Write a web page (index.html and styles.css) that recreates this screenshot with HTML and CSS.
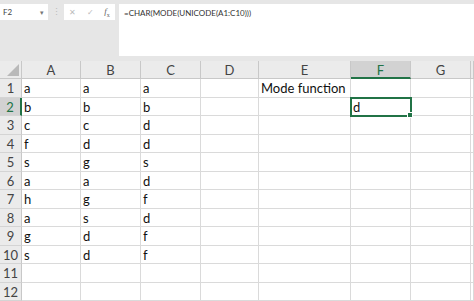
FILE: index.html
```html
<!DOCTYPE html>
<html lang="en">
<head>
    <meta charset="UTF-8">
    <title>Mode function</title>
    <link rel="stylesheet" href="styles.css">
</head>
<body>
    <div class="formula-bar">
        <div class="name-box">
            <span>F2</span>
            <span class="caret">&#9662;</span>
        </div>
        <div class="grip">&#8942;</div>
        <div class="fx-buttons">
            <span class="fx-x">&#10005;</span>
            <span class="fx-ok">&#10003;</span>
            <span class="fx-f"><i>f</i><sub>x</sub></span>
        </div>
        <div class="formula">=CHAR(MODE(UNICODE(A1:C10)))</div>
    </div>

    <div class="sheet">
        <div class="corner"><span class="tri"></span></div>
        <div class="col-head">A</div>
        <div class="col-head">B</div>
        <div class="col-head">C</div>
        <div class="col-head">D</div>
        <div class="col-head">E</div>
        <div class="col-head active">F</div>
        <div class="col-head">G</div>
        <div class="col-head"></div>

        <div class="row-head">1</div><div class="cell">a</div><div class="cell">a</div><div class="cell">a</div><div class="cell"></div><div class="cell">Mode function</div><div class="cell"></div><div class="cell"></div><div class="cell"></div>
        <div class="row-head active">2</div><div class="cell">b</div><div class="cell">b</div><div class="cell">b</div><div class="cell"></div><div class="cell"></div><div class="cell selected">d<span class="handle"></span></div><div class="cell"></div><div class="cell"></div>
        <div class="row-head">3</div><div class="cell">c</div><div class="cell">c</div><div class="cell">d</div><div class="cell"></div><div class="cell"></div><div class="cell"></div><div class="cell"></div><div class="cell"></div>
        <div class="row-head">4</div><div class="cell">f</div><div class="cell">d</div><div class="cell">d</div><div class="cell"></div><div class="cell"></div><div class="cell"></div><div class="cell"></div><div class="cell"></div>
        <div class="row-head">5</div><div class="cell">s</div><div class="cell">g</div><div class="cell">s</div><div class="cell"></div><div class="cell"></div><div class="cell"></div><div class="cell"></div><div class="cell"></div>
        <div class="row-head">6</div><div class="cell">a</div><div class="cell">a</div><div class="cell">d</div><div class="cell"></div><div class="cell"></div><div class="cell"></div><div class="cell"></div><div class="cell"></div>
        <div class="row-head">7</div><div class="cell">h</div><div class="cell">g</div><div class="cell">f</div><div class="cell"></div><div class="cell"></div><div class="cell"></div><div class="cell"></div><div class="cell"></div>
        <div class="row-head">8</div><div class="cell">a</div><div class="cell">s</div><div class="cell">d</div><div class="cell"></div><div class="cell"></div><div class="cell"></div><div class="cell"></div><div class="cell"></div>
        <div class="row-head">9</div><div class="cell">g</div><div class="cell">d</div><div class="cell">f</div><div class="cell"></div><div class="cell"></div><div class="cell"></div><div class="cell"></div><div class="cell"></div>
        <div class="row-head">10</div><div class="cell">s</div><div class="cell">d</div><div class="cell">f</div><div class="cell"></div><div class="cell"></div><div class="cell"></div><div class="cell"></div><div class="cell"></div>
        <div class="row-head">11</div><div class="cell"></div><div class="cell"></div><div class="cell"></div><div class="cell"></div><div class="cell"></div><div class="cell"></div><div class="cell"></div><div class="cell"></div>
        <div class="row-head">12</div><div class="cell"></div><div class="cell"></div><div class="cell"></div><div class="cell"></div><div class="cell"></div><div class="cell"></div><div class="cell"></div><div class="cell"></div>
    </div>
</body>
</html>
```

FILE: styles.css
```css
body {
    margin: 0;
    width: 474px;
    height: 301px;
    overflow: hidden;
    background: #fff;
    font-family: "Lato", "Open Sans", sans-serif;
    color: #111;
}

/* Formula bar */
.formula-bar {
    height: 61px;
    background-color: #e6e6e6;
    display: flex;
    align-items: flex-start;
    padding-top: 4px;
    box-sizing: border-box;
}

.name-box {
    width: 48px;
    height: 16px;
    background-color: #fff;
    display: flex;
    align-items: center;
    justify-content: space-between;
    padding: 0 4px 0 3px;
    box-sizing: border-box;
    font-size: 8px;
    color: #444;
}

.name-box .caret {
    font-size: 7px;
    color: #777;
}

.grip {
    width: 16px;
    height: 16px;
    line-height: 16px;
    text-align: center;
    font-size: 9px;
    color: #bbb;
}

.fx-buttons {
    width: 51px;
    height: 16px;
    background-color: #fff;
    display: flex;
    align-items: center;
    justify-content: space-around;
    font-size: 8px;
    color: #bbb;
}

.fx-f {
    color: #666;
    font-family: "Liberation Serif", serif;
    font-size: 9px;
}

.fx-f sub {
    font-size: 6px;
}

.formula {
    flex: 1;
    margin-left: 4px;
    height: 52px;
    background-color: #fff;
    padding: 4px 0 0 5px;
    box-sizing: border-box;
    font-size: 8px;
    color: #333;
}

/* Grid */
.sheet {
    display: grid;
    grid-template-columns: 22px 59px 60px 60px 58px 92px 60px 60px 1fr;
    grid-template-rows: 18px repeat(12, 18.5px);
}

.corner {
    position: relative;
    background-color: #ebebeb;
    border-right: 1px solid #c8c8c8;
    border-bottom: 1px solid #c8c8c8;
}

.corner .tri {
    position: absolute;
    right: 2px;
    bottom: 2px;
    width: 0;
    height: 0;
    border-left: 12px solid transparent;
    border-bottom: 12px solid #b9b9b9;
}

.col-head {
    background-color: #ebebeb;
    border-right: 1px solid #c8c8c8;
    border-bottom: 1px solid #c8c8c8;
    text-align: center;
    font-size: 13px;
    line-height: 18px;
    color: #444;
}

.col-head.active {
    background-color: #d2d2d2;
    border-bottom: 2px solid #217346;
    color: #217346;
}

.row-head {
    background-color: #ebebeb;
    border-right: 1px solid #c8c8c8;
    border-bottom: 1px solid #d4d4d4;
    text-align: center;
    font-size: 13px;
    line-height: 18px;
    color: #444;
}

.row-head.active {
    background-color: #d2d2d2;
    border-right: 2px solid #217346;
    color: #217346;
}

.cell {
    position: relative;
    border-right: 1px solid #dadada;
    border-bottom: 1px solid #dadada;
    font-size: 13px;
    line-height: 18px;
    padding-left: 2px;
    white-space: nowrap;
}

.cell.selected {
    outline: 2px solid #217346;
    outline-offset: -1px;
    z-index: 1;
}

.cell .handle {
    position: absolute;
    right: -3px;
    bottom: -3px;
    width: 4px;
    height: 4px;
    background-color: #217346;
    border: 1px solid #fff;
}
```
